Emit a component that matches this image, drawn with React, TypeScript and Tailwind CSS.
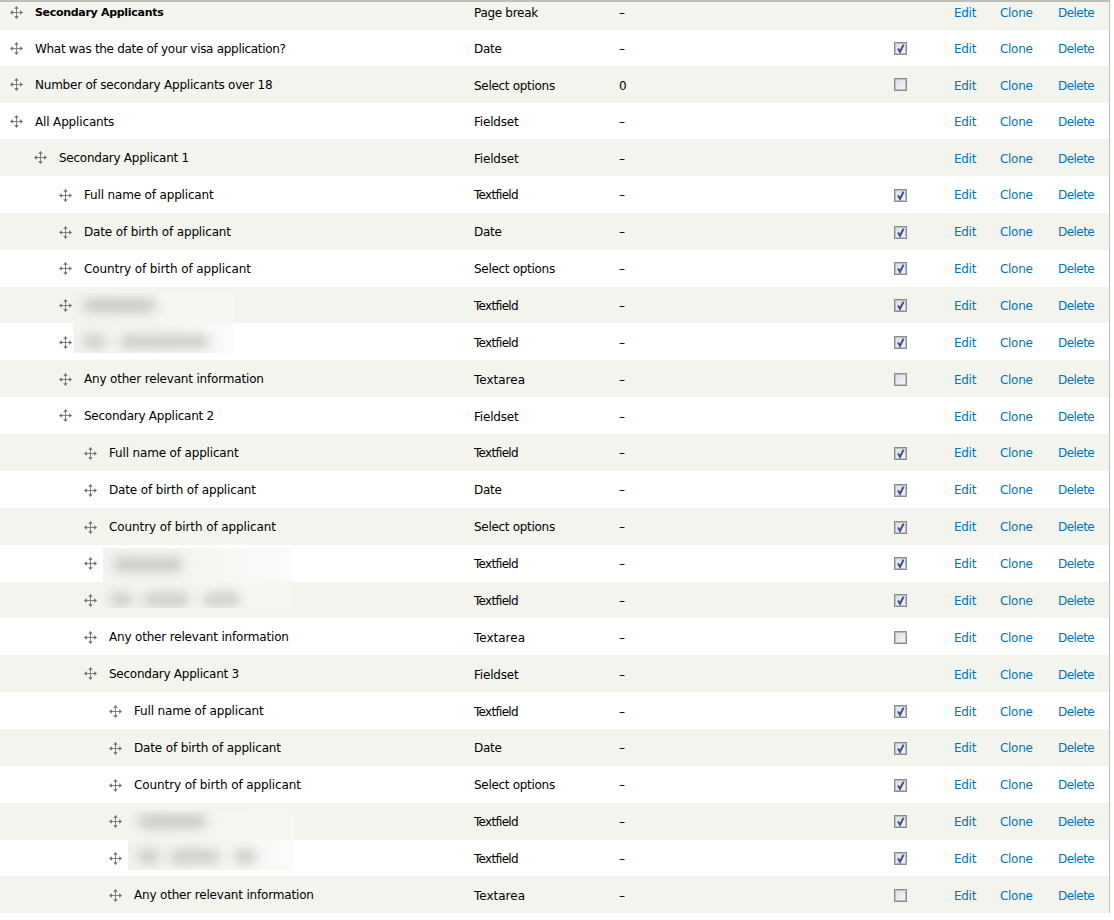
const F = "font-['DejaVu_Sans',sans-serif]";

type Row = {
  label?: string;
  type: string;
  depth: number;
  value?: string;
  check?: boolean;
  bold?: boolean;
  h: string;
  blur?: "a" | "b" | "c";
};

const pads = ["pl-[10px]", "pl-[34px]", "pl-[59px]", "pl-[84px]", "pl-[109px]"];

const rows: Row[] = [
  { label: "Secondary Applicants", type: "Page break", depth: 0, bold: true, h: "h-[28px] pb-[8px]" },
  { label: "What was the date of your visa application?", type: "Date", depth: 0, check: true, h: "h-[36px]" },
  { label: "Number of secondary Applicants over 18", type: "Select options", depth: 0, value: "0", check: false, h: "h-[37px]" },
  { label: "All Applicants", type: "Fieldset", depth: 0, h: "h-[36px]" },
  { label: "Secondary Applicant 1", type: "Fieldset", depth: 1, h: "h-[37px]" },
  { label: "Full name of applicant", type: "Textfield", depth: 2, check: true, h: "h-[37px]" },
  { label: "Date of birth of applicant", type: "Date", depth: 2, check: true, h: "h-[37px]" },
  { label: "Country of birth of applicant", type: "Select options", depth: 2, check: true, h: "h-[37px]" },
  { type: "Textfield", depth: 2, check: true, h: "h-[36px]", blur: "a" },
  { type: "Textfield", depth: 2, check: true, h: "h-[37px]" },
  { label: "Any other relevant information", type: "Textarea", depth: 2, check: false, h: "h-[37px]" },
  { label: "Secondary Applicant 2", type: "Fieldset", depth: 2, h: "h-[37px]" },
  { label: "Full name of applicant", type: "Textfield", depth: 3, check: true, h: "h-[37px]" },
  { label: "Date of birth of applicant", type: "Date", depth: 3, check: true, h: "h-[37px]" },
  { label: "Country of birth of applicant", type: "Select options", depth: 3, check: true, h: "h-[37px]" },
  { type: "Textfield", depth: 3, check: true, h: "h-[37px]", blur: "b" },
  { type: "Textfield", depth: 3, check: true, h: "h-[36px]" },
  { label: "Any other relevant information", type: "Textarea", depth: 3, check: false, h: "h-[37px]" },
  { label: "Secondary Applicant 3", type: "Fieldset", depth: 3, h: "h-[37px]" },
  { label: "Full name of applicant", type: "Textfield", depth: 4, check: true, h: "h-[37px]" },
  { label: "Date of birth of applicant", type: "Date", depth: 4, check: true, h: "h-[37px]" },
  { label: "Country of birth of applicant", type: "Select options", depth: 4, check: true, h: "h-[37px]" },
  { type: "Textfield", depth: 4, check: true, h: "h-[37px]", blur: "c" },
  { type: "Textfield", depth: 4, check: true, h: "h-[36px]" },
  { label: "Any other relevant information", type: "Textarea", depth: 4, check: false, h: "h-[37px]" },
];

// Letter spacing per string: the reference's font has slightly different glyph widths.
const spacing: Record<string, string> = {
  "Number of secondary Applicants over 18": "tracking-[-0.22px]",
  "All Applicants": "tracking-[-0.15px]",
  "Secondary Applicant 1": "tracking-[-0.25px]",
  "Secondary Applicant 2": "tracking-[-0.25px]",
  "Secondary Applicant 3": "tracking-[-0.25px]",
  "Full name of applicant": "tracking-[-0.16px]",
  "Date of birth of applicant": "tracking-[-0.15px]",
  "Country of birth of applicant": "tracking-[-0.1px]",
  "Any other relevant information": "tracking-[-0.18px]",
  Textfield: "tracking-[-0.7px]",
  Textarea: "tracking-[0px]",
  Fieldset: "tracking-[-0.2px]",
  Delete: "tracking-[-0.55px]",
};

// Rows whose cells sit one pixel lower in the reference (table cell rounding).
const typeShift = new Set([0, 1, 2, 3, 4, 8, 9, 10, 11, 16, 17, 18, 19, 23, 24]);
const labelShift = new Set([0, 1, 3]);
const boxShift = new Set([5, 6, 9, 10, 12, 13, 14, 17, 19, 20, 21, 24]);

const blobs = {
  a: {
    box: "left-[73px] top-[6px] w-[161px]",
    line1: "left-[10px] top-[6px] w-[73px]",
    segs: ["left-[10px] top-[42px] w-[23px]", "left-[47px] top-[42px] w-[90px]"],
  },
  b: {
    box: "left-[103px] top-[3px] w-[188px]",
    line1: "left-[10px] top-[10px] w-[70px]",
    segs: [
      "left-[7px] top-[45px] w-[23px]",
      "left-[40px] top-[45px] w-[47px]",
      "left-[100px] top-[45px] w-[37px]",
    ],
  },
  c: {
    box: "left-[128px] top-[7px] w-[166px]",
    line1: "left-[10px] top-[5px] w-[69px]",
    segs: [
      "left-[9px] top-[40px] w-[23px]",
      "left-[42px] top-[40px] w-[50px]",
      "left-[105px] top-[40px] w-[24px]",
    ],
  },
};

function Handle() {
  return (
    <svg width="13" height="13" viewBox="0 0 13 13" className="shrink-0">
      <path d="M6 1.5h1v10H6zM1.5 6h10v1h-10z" fill="#808080" />
      <path d="M6.5 0 8.7 2.8H4.3zM6.5 13 4.3 10.2h4.4zM0 6.5 2.8 4.3v4.4zM13 6.5 10.2 8.7V4.3z" fill="#707070" />
    </svg>
  );
}

function Check({ on }: { on: boolean }) {
  return (
    <span className="relative block h-[13px] w-[13px] border border-[#8d8d8d] bg-gradient-to-br from-[#d9dbe4] to-[#f8f8fa] shadow-[inset_0_0_0_1px_#bdbdbd]">
      {on && (
        <svg width="11" height="11" viewBox="0 0 11 11" className="absolute left-0 top-0">
          <path d="M3 5.4 5 8.8 8.6 1.6" fill="none" stroke="#3f5199" strokeWidth="2" />
        </svg>
      )}
    </span>
  );
}

function Blur({ kind }: { kind: "a" | "b" | "c" }) {
  const b = blobs[kind];
  return (
    <div className={`absolute z-10 h-[60px] overflow-hidden bg-gradient-to-r from-[#f3f3ef] via-[#f5f5f2] to-[#f8f8f5]/60 ${b.box}`}>
      <div className={`absolute h-[13px] rounded-full bg-[#c6c7c1] blur-[6px] ${b.line1}`} />
      {b.segs.map((s, i) => (
        <div key={i} className={`absolute h-[13px] rounded-full bg-[#cacbc5] blur-[6px] ${s}`} />
      ))}
    </div>
  );
}

export default function App() {
  return (
    <div className={`min-h-[920px] w-full bg-white text-[12px] leading-[16px] tracking-[-0.3px] text-black ${F}`}>
      <div className="w-[1110px] border-r border-[#bebfb9] border-t-2 border-t-[#bebfb9]">
        {rows.map((r, i) => {
          const shift = typeShift.has(i) ? "pt-[2px]" : "";
          return (
            <div
              key={i}
              className={`relative grid grid-cols-[474px_145px_275px_60px_46px_58px_1fr] items-center ${r.h} ${i % 2 === 0 ? "bg-[#f3f4ee]" : "bg-white"}`}
            >
              {r.blur && <Blur kind={r.blur} />}
              <div className={`flex items-center gap-[12px] ${pads[r.depth]}`}>
                <span className={boxShift.has(i) ? "pt-[2px]" : ""}>
                  <Handle />
                </span>
                {r.label && (
                  <span
                    className={`${r.bold ? "text-[11px] font-bold" : ""} ${spacing[r.label] ?? ""} ${labelShift.has(i) ? "pt-[2px]" : ""}`}
                  >
                    {r.label}
                  </span>
                )}
              </div>
              <div className={`${spacing[r.type] ?? ""} ${shift}`}>{r.type}</div>
              <div className={shift}>{r.value ?? "–"}</div>
              <div className={boxShift.has(i) ? "pt-[2px]" : ""}>
                {r.check !== undefined && <Check on={r.check} />}
              </div>
              <a className={`text-[#0074bd] ${shift}`}>Edit</a>
              <a className={`text-[#0074bd] ${shift}`}>Clone</a>
              <a className={`text-[#0074bd] ${spacing.Delete} ${shift}`}>Delete</a>
            </div>
          );
        })}
      </div>
    </div>
  );
}
